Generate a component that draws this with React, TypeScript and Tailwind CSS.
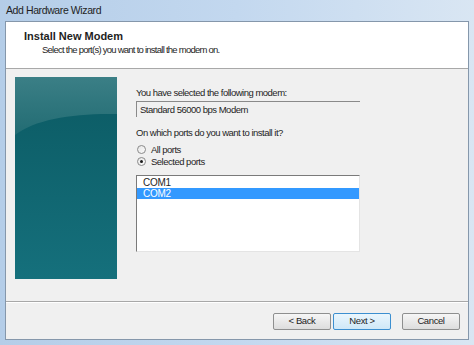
import React from "react";

const font = { fontFamily: '"Liberation Sans", Arial, sans-serif' };

const Radio = ({ checked, label }: { checked?: boolean; label: string }) => (
  <div className="flex items-center h-[12px]">
    <span className="w-[9px] h-[9px] rounded-full border border-[#8a8a8a] bg-gradient-to-br from-[#e6e6e6] to-[#fbfbfb] flex items-center justify-center">
      {checked && <span className="w-[3px] h-[3px] rounded-full bg-[#1a1a1a]" />}
    </span>
    <span className="ml-[5px]">{label}</span>
  </div>
);

const Btn = ({ label, focus }: { label: string; focus?: boolean }) => (
  <div
    className={`w-[58px] h-[17px] rounded-[2px] flex items-center justify-center text-[9.5px] tracking-[-0.4px] ${
      focus
        ? "border border-[#3c8fd0] bg-gradient-to-b from-[#eaf6fd] to-[#cfe8f8]"
        : "border border-[#8e8f8f] bg-gradient-to-b from-[#f6f6f6] to-[#dddddd]"
    }`}
  >
    {label}
  </div>
);

export default function App() {
  return (
    <div
      style={font}
      className="w-[474px] h-[345px] flex flex-col bg-gradient-to-r from-[#b4cde8] via-[#c3d8ef] to-[#d9e6f3] text-[#1e1e1e] overflow-hidden"
    >
      {/* Title bar */}
      <div className="h-[21px] flex items-center pl-[6px] text-[10.5px] tracking-[-0.4px] text-[#1f1f1f]">
        Add Hardware Wizard
      </div>

      {/* Client area */}
      <div className="mx-[5px] h-[319px] border border-[#8597ab] bg-[#f0f0f0] flex flex-col">
        {/* Header */}
        <div className="h-[47px] bg-white border-b border-[#a8a8a8] pl-[18px] pt-[8px] flex flex-col">
          <div className="text-[11px] font-bold leading-[13px]">Install New Modem</div>
          <div className="text-[9.5px] tracking-[-0.75px] leading-[13px] pl-[18px]">
            Select the port(s) you want to install the modem on.
          </div>
        </div>

        {/* Middle */}
        <div className="h-[233px] flex pl-[9px] pt-[8px] border-b border-[#a8a8a8]">
          <div className="relative w-[102px] h-[202px] overflow-hidden bg-gradient-to-b from-[#0b5a63] to-[#15707c]">
            <svg className="absolute inset-0" width="102" height="202" viewBox="0 0 102 202">
              <defs>
                <linearGradient id="hl" x1="0" y1="0" x2="0" y2="1">
                  <stop offset="0" stopColor="#3b7f86" />
                  <stop offset="1" stopColor="#226c73" />
                </linearGradient>
              </defs>
              <path d="M0 0 H102 V37 C60 36 20 42 0 58 Z" fill="url(#hl)" />
            </svg>
          </div>

          <div className="ml-[19px] pt-[9px] w-[224px] text-[9.5px] tracking-[-0.5px] leading-[13px]">
            <div>You have selected the following modem:</div>
            <div className="mt-[2px] h-[16px] border-t border-l border-[#8a8a8a] bg-[#f0f0f0] flex items-center pl-[3px]">
              Standard 56000 bps Modem
            </div>
            <div className="mt-[9px]">On which ports do you want to install it?</div>
            <div className="mt-[4px] ml-[1px] flex flex-col">
              <Radio label="All ports" />
              <Radio checked label="Selected ports" />
            </div>
            <div className="mt-[8px] h-[77px] border-t border-l border-[#7a7a7a] border-b border-r border-b-[#e4e4e4] border-r-[#e4e4e4] bg-white tracking-[-0.3px]">
              <div className="h-[11px] leading-[11px] pl-[6px] mt-[1px] text-[10px]">COM1</div>
              <div className="h-[11px] leading-[11px] pl-[6px] bg-[#3399ff] text-white text-[10px]">COM2</div>
            </div>
          </div>
        </div>

        {/* Buttons */}
        <div className="flex-1 border-t border-white flex items-start justify-end pr-[8px] pt-[10px]">
          <Btn label="< Back" />
          <div className="w-[2px]" />
          <Btn label="Next >" focus />
          <div className="w-[11px]" />
          <Btn label="Cancel" />
        </div>
      </div>
    </div>
  );
}
